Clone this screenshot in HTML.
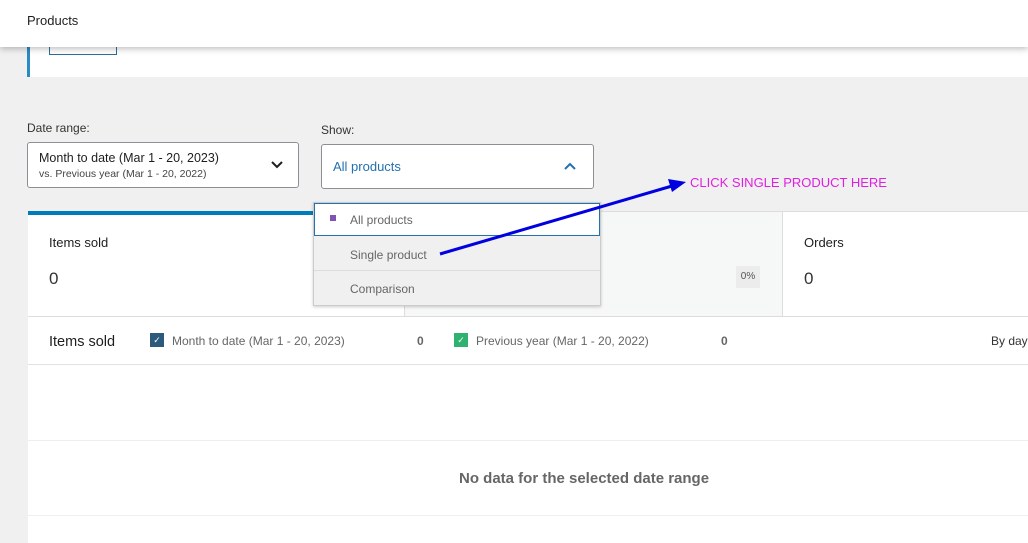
<!DOCTYPE html>
<html><head><style>
*{box-sizing:border-box;margin:0;padding:0}
body{width:1028px;height:543px;overflow:hidden;background:#f0f0f1;font-family:"Liberation Sans",sans-serif;position:relative;color:#1e1e1e}
.a{position:absolute}
</style></head><body>
<div class="a" style="left:27px;top:40px;width:1001px;height:37px;background:#fff;border-left:3px solid #2a8bc4"></div>
<div class="a" style="left:49px;top:40px;width:68px;height:15px;border:1px solid #2a6e9c;border-top:none"></div>
<div class="a" style="left:0;top:0;width:1028px;height:47px;background:#fff;box-shadow:0 2px 6px rgba(0,0,0,.25)"></div>
<div class="a" style="left:27px;top:13px;font-size:13px">Products</div>

<div class="a" style="left:27px;top:121px;font-size:12px;color:#333">Date range:</div>
<div class="a" style="left:27px;top:142px;width:272px;height:46px;background:#fff;border:1px solid #8c8f94;border-radius:3px"></div>
<div class="a" style="left:39px;top:151px;font-size:12.5px">Month to date (Mar 1 - 20, 2023)</div>
<div class="a" style="left:39px;top:168px;font-size:10.5px;color:#444">vs. Previous year (Mar 1 - 20, 2022)</div>
<svg class="a" style="left:270px;top:160px" width="14" height="10"><path d="M2 2l5 5 5-5" fill="none" stroke="#1e1e1e" stroke-width="2"/></svg>

<div class="a" style="left:321px;top:123px;font-size:12px;color:#333">Show:</div>
<div class="a" style="left:321px;top:144px;width:273px;height:45px;background:#fff;border:1px solid #8c8f94;border-radius:3px"></div>
<div class="a" style="left:333px;top:159px;font-size:13px;color:#2271b1">All products</div>
<svg class="a" style="left:563px;top:162px" width="14" height="10"><path d="M2 7l5-5 5 5" fill="none" stroke="#2271b1" stroke-width="2"/></svg>

<div class="a" style="left:28px;top:211px;width:377px;height:106px;background:#fff;border-top:4px solid #007cba"></div>
<div class="a" style="left:404px;top:211px;width:379px;height:106px;background:#f6f7f7;border-left:1px solid #ddd;border-top:1px solid #ddd"></div>
<div class="a" style="left:782px;top:211px;width:246px;height:106px;background:#fff;border-left:1px solid #ddd;border-top:1px solid #ddd"></div>
<div class="a" style="left:49px;top:235px;font-size:13px">Items sold</div>
<div class="a" style="left:49px;top:269px;font-size:17px;color:#333">0</div>
<div class="a" style="left:736px;top:266px;width:24px;height:22px;background:#ececec;font-size:10px;color:#555;text-align:center;line-height:22px">0%</div>
<div class="a" style="left:804px;top:235px;font-size:13px">Orders</div>
<div class="a" style="left:804px;top:269px;font-size:17px;color:#333">0</div>

<div class="a" style="left:28px;top:316px;width:1000px;height:227px;background:#fff;border-top:1px solid #ddd"></div>
<div class="a" style="left:28px;top:364px;width:1000px;height:1px;background:#e2e2e2"></div>
<div class="a" style="left:28px;top:440px;width:1000px;height:1px;background:#eee"></div>
<div class="a" style="left:28px;top:515px;width:1000px;height:1px;background:#eee"></div>
<div class="a" style="left:49px;top:334px;font-size:14.5px">Items sold</div>
<div class="a" style="left:150px;top:333px;width:14px;height:14px;background:#2b5a7d;color:#fff;font-size:9px;text-align:center;line-height:14px">✓</div>
<div class="a" style="left:172px;top:334px;font-size:12px;color:#666">Month to date (Mar 1 - 20, 2023)</div>
<div class="a" style="left:417px;top:334px;font-size:12px;color:#666;font-weight:bold">0</div>
<div class="a" style="left:454px;top:333px;width:14px;height:14px;background:#2fb270;color:#fff;font-size:9px;text-align:center;line-height:14px">✓</div>
<div class="a" style="left:476px;top:334px;font-size:12px;color:#666">Previous year (Mar 1 - 20, 2022)</div>
<div class="a" style="left:721px;top:334px;font-size:12px;color:#666;font-weight:bold">0</div>
<div class="a" style="left:991px;top:334px;font-size:12px;color:#333">By day</div>
<div class="a" style="left:459px;top:470px;font-size:15px;color:#666;font-weight:bold">No data for the selected date range</div>

<div class="a" style="left:313px;top:202px;width:288px;height:104px;background:#f0f0f0;border:1px solid #ccc;box-shadow:0 1px 3px rgba(0,0,0,.2)"></div>
<div class="a" style="left:314px;top:203px;width:286px;height:33px;background:#fff;border:1px solid #2271b1"></div>
<div class="a" style="left:330px;top:215px;width:6px;height:6px;background:#7f54b3"></div>
<div class="a" style="left:350px;top:213px;font-size:12px;color:#666">All products</div>
<div class="a" style="left:350px;top:248px;font-size:12px;color:#666">Single product</div>
<div class="a" style="left:314px;top:270px;width:286px;height:1px;background:#ddd"></div>
<div class="a" style="left:350px;top:282px;font-size:12px;color:#666">Comparison</div>

<svg class="a" style="left:0;top:0" width="1028" height="543"><line x1="440" y1="254" x2="672" y2="186" stroke="#0000e0" stroke-width="3"/><path d="M686 182L668 179L672 192Z" fill="#0000e0"/></svg>
<div class="a" style="left:690px;top:175px;font-size:13px;color:#e020e0">CLICK SINGLE PRODUCT HERE</div>
</body></html>
